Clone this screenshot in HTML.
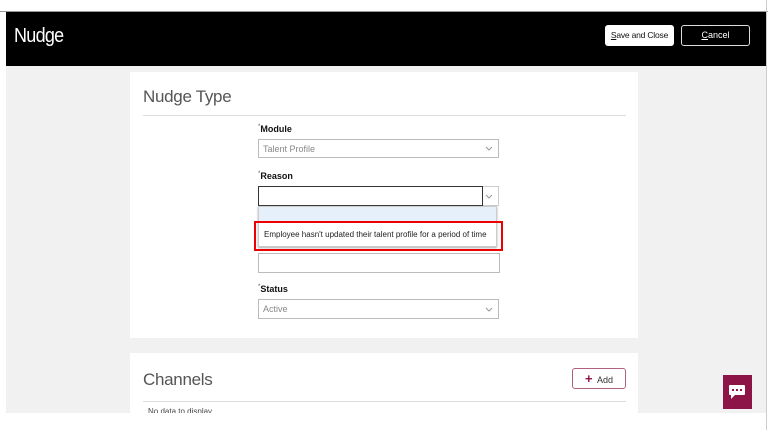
<!DOCTYPE html>
<html><head><style>
body{margin:0;width:768px;height:430px;background:#fff;position:relative;overflow:hidden;font-family:"Liberation Sans",sans-serif;}
.abs{position:absolute;}
.lbl{position:absolute;font-size:9px;color:#111;font-weight:600;}
.lbl sup{font-size:6px;color:#555;font-weight:normal}
.sel{position:absolute;border:1px solid #bbb;background:#fff;font-size:9px;color:#888;box-sizing:border-box;padding:4px 4px;}
.chev{position:absolute;right:5px;top:6px;}
</style></head><body>
<div class="abs" style="left:0;top:0;width:768px;height:12px;border-bottom:1px solid #999;box-sizing:border-box"></div>
<div class="abs" style="left:766px;top:0;width:1px;height:430px;background:#ccc"></div>
<div class="abs" style="left:6px;top:12px;width:760px;height:54px;background:#000"></div>
<div class="abs" style="left:14px;top:25px;color:#fff;font-size:20px;letter-spacing:-0.8px;transform:scaleX(0.9);transform-origin:left">Nudge</div>
<div class="abs" style="left:605px;top:25px;width:69px;height:21px;background:#fff;border-radius:3px;font-size:8.5px;line-height:21px;text-align:center;color:#111;letter-spacing:-0.2px"><u>S</u>ave and Close</div>
<div class="abs" style="left:681px;top:25px;width:69px;height:21px;border:1px solid #ddd;box-sizing:border-box;border-radius:3px;font-size:9px;line-height:19px;text-align:center;color:#fff"><u>C</u>ancel</div>
<div class="abs" style="left:6px;top:66px;width:760px;height:347px;background:#f1f1f1"></div>
<div class="abs" style="left:130px;top:72px;width:508px;height:266px;background:#fff"></div>
<div class="abs" style="left:143px;top:87px;font-size:17px;color:#555;letter-spacing:-0.3px">Nudge Type</div>
<div class="abs" style="left:143px;top:115px;width:483px;height:1px;background:#ddd"></div>
<div class="lbl" style="left:258px;top:124px"><sup>*</sup>Module</div>
<div class="sel" style="left:258px;top:139px;width:241px;height:19px">Talent Profile<svg class="chev" width="8" height="5" viewBox="0 0 8 5"><path d="M1 1L4 4L7 1" fill="none" stroke="#999" stroke-width="1"/></svg></div>
<div class="lbl" style="left:258px;top:171px"><sup>*</sup>Reason</div>
<div class="sel" style="left:258px;top:186px;width:241px;height:20px;border-color:#ccc"><svg class="chev" style="top:7px" width="8" height="5" viewBox="0 0 8 5"><path d="M1 1L4 4L7 1" fill="none" stroke="#999" stroke-width="1"/></svg></div>
<div class="abs" style="left:258px;top:186px;width:225px;height:20px;border:1px solid #333;box-sizing:border-box;background:#fff"></div>
<div class="abs" style="left:258px;top:206px;width:239px;height:41px;background:#fff;border:1px solid #ccc;box-sizing:border-box;box-shadow:0 1px 2px #aaa"></div>
<div class="abs" style="left:259px;top:207px;width:237px;height:15px;background:#e6f0fb"></div>
<div class="abs" style="left:264px;top:230px;font-size:8px;color:#222">Employee hasn't updated their talent profile for a period of time</div>
<div class="abs" style="left:254px;top:221px;width:249px;height:30px;border:2px solid #e00;box-sizing:border-box"></div>
<div class="sel" style="left:258px;top:253px;width:242px;height:20px"></div>
<div class="lbl" style="left:258px;top:284px"><sup>*</sup>Status</div>
<div class="sel" style="left:258px;top:299px;width:241px;height:20px">Active<svg class="chev" style="top:7px" width="8" height="5" viewBox="0 0 8 5"><path d="M1 1L4 4L7 1" fill="none" stroke="#999" stroke-width="1"/></svg></div>
<div class="abs" style="left:130px;top:353px;width:508px;height:60px;background:#fff"></div>
<div class="abs" style="left:143px;top:370px;font-size:17px;color:#555;letter-spacing:-0.3px">Channels</div>
<div class="abs" style="left:572px;top:368px;width:54px;height:21px;border:1px solid #b06080;box-sizing:border-box;border-radius:3px;font-size:9px;line-height:19px;color:#333;text-align:center"><b style="color:#8c1446;font-size:13px">+</b>&nbsp; Add</div>
<div class="abs" style="left:143px;top:401px;width:483px;height:1px;background:#ddd"></div>
<div class="abs" style="left:148px;top:407px;font-size:8px;color:#444;height:6px;overflow:hidden">No data to display</div>
<div class="abs" style="left:723px;top:375px;width:29px;height:34px;background:#8c1446"></div>
<div class="abs" style="left:729px;top:385px;width:16px;height:10px;background:#fff;border-radius:1px"></div>
<div class="abs" style="left:731px;top:395px;width:0;height:0;border-left:4px solid #fff;border-bottom:4px solid transparent"></div>
<div class="abs" style="left:732px;top:389px;font-size:0">
<span style="display:inline-block;width:2px;height:2px;background:#8c1446;margin-right:2px"></span><span style="display:inline-block;width:2px;height:2px;background:#8c1446;margin-right:2px"></span><span style="display:inline-block;width:2px;height:2px;background:#8c1446"></span></div>
</body></html>
